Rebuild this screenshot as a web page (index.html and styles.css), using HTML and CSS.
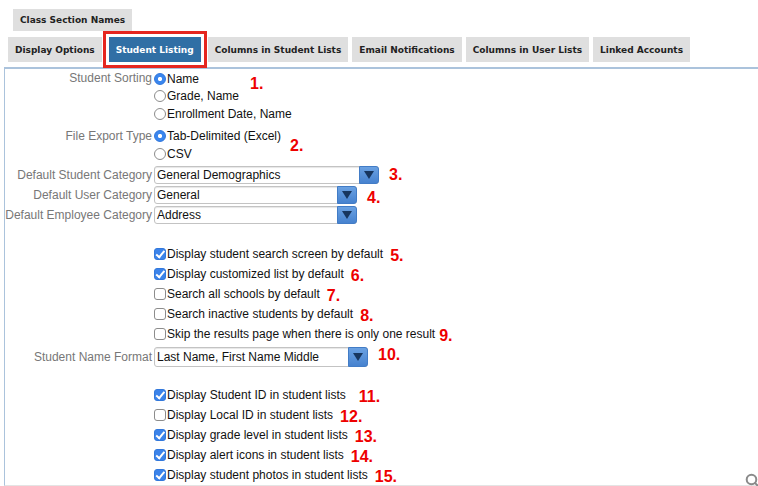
FILE: index.html
```html
<!DOCTYPE html>
<html lang="en">
<head>
<meta charset="utf-8">
<title>Student Listing</title>
<link rel="stylesheet" href="styles.css">
</head>
<body>
<div class="page">
  <div class="tabs tabs-top">
    <div class="tab">Class Section Names</div>
  </div>
  <div class="tabs tabs-main">
    <div class="tab">Display Options</div>
    <div class="tab active">Student Listing</div>
    <div class="tab">Columns in Student Lists</div>
    <div class="tab">Email Notifications</div>
    <div class="tab">Columns in User Lists</div>
    <div class="tab">Linked Accounts</div>
  </div>

  <div class="panel">
    <div class="field group">
      <div class="label">Student Sorting</div>
      <div class="opts">
        <label class="opt"><input type="radio" name="sort" checked>Name<span class="n n1">1.</span></label>
        <label class="opt"><input type="radio" name="sort">Grade, Name</label>
        <label class="opt"><input type="radio" name="sort">Enrollment Date, Name</label>
      </div>
    </div>
    <div class="field group group-gap">
      <div class="label">File Export Type</div>
      <div class="opts">
        <label class="opt"><input type="radio" name="exp" checked>Tab-Delimited (Excel)<span class="n n2">2.</span></label>
        <label class="opt"><input type="radio" name="exp">CSV</label>
      </div>
    </div>

    <div class="selects">
      <div class="field sel-row">
        <div class="label">Default Student Category</div>
        <div class="select w-wide"><span class="val">General Demographics</span><span class="arrow"><svg width="10" height="8" viewBox="0 0 10 8"><polygon points="0,0 10,0 5,8"/></svg></span></div>
        <span class="n n-sel">3.</span>
      </div>
      <div class="field sel-row">
        <div class="label">Default User Category</div>
        <div class="select w-mid"><span class="val">General</span><span class="arrow"><svg width="10" height="8" viewBox="0 0 10 8"><polygon points="0,0 10,0 5,8"/></svg></span></div>
        <span class="n n-sel n4">4.</span>
      </div>
      <div class="field sel-row">
        <div class="label">Default Employee Category</div>
        <div class="select w-mid"><span class="val">Address</span><span class="arrow"><svg width="10" height="8" viewBox="0 0 10 8"><polygon points="0,0 10,0 5,8"/></svg></span></div>
      </div>
    </div>

    <div class="checks checks-first">
      <label class="chk"><input type="checkbox" checked>Display student search screen by default<span class="n">5.</span></label>
      <label class="chk"><input type="checkbox" checked>Display customized list by default<span class="n">6.</span></label>
      <label class="chk"><input type="checkbox">Search all schools by default<span class="n">7.</span></label>
      <label class="chk"><input type="checkbox">Search inactive students by default<span class="n">8.</span></label>
      <label class="chk"><input type="checkbox">Skip the results page when there is only one result<span class="n n9">9.</span></label>
    </div>

    <div class="field sel-row tall">
      <div class="label">Student Name Format</div>
      <div class="select w-name"><span class="val">Last Name, First Name Middle</span><span class="arrow"><svg width="10" height="8" viewBox="0 0 10 8"><polygon points="0,0 10,0 5,8"/></svg></span></div>
      <span class="n n-sel">10.</span>
    </div>

    <div class="checks checks-second">
      <label class="chk"><input type="checkbox" checked>Display Student ID in student lists<span class="n n11">11.</span></label>
      <label class="chk"><input type="checkbox">Display Local ID in student lists<span class="n">12.</span></label>
      <label class="chk"><input type="checkbox" checked>Display grade level in student lists<span class="n">13.</span></label>
      <label class="chk"><input type="checkbox" checked>Display alert icons in student lists<span class="n">14.</span></label>
      <label class="chk"><input type="checkbox" checked>Display student photos in student lists<span class="n">15.</span></label>
    </div>
  </div>
</div>

<div class="corner" aria-hidden="true">
  <svg width="13" height="13" viewBox="0 0 13 13"><circle cx="6.5" cy="6.5" r="4.8" fill="none" stroke="#8a8a8a" stroke-width="2"/><line x1="9.6" y1="9.6" x2="13" y2="13" stroke="#8a8a8a" stroke-width="2"/></svg>
</div>
</body>
</html>
```

FILE: styles.css
```css
html, body {
  margin: 0;
  padding: 0;
  background: #fff;
}
body {
  font-family: "Liberation Sans", Arial, sans-serif;
  font-size: 12px;
  color: #111;
  overflow: hidden;
  height: 486px;
}
.page {
  padding-top: 9px;
}

/* tabs */
.tabs {
  display: flex;
  gap: 4px;
  font-family: "DejaVu Sans", Verdana, sans-serif;
  font-weight: bold;
  font-size: 9px;
  color: #222;
}
.tabs-top {
  padding-left: 13px;
}
.tabs-main {
  padding-left: 8px;
  margin-top: 6px;
}
.tab {
  background: #dfdfdf;
  height: 25px;
  padding: 0 7px;
  box-sizing: border-box;
  display: flex;
  align-items: center;
  white-space: nowrap;
}
.tabs-top .tab {
  height: 22px;
  padding: 0 7px;
}
.tab.active {
  background: #306fa5;
  color: #fff;
  outline: 3px solid #e5261f;
  outline-offset: 3px;
  margin: 0 3px 0 3px;
}

/* panel */
.panel {
  margin: 5px 0 0 4px;
  border-top: 2px solid #abc3dc;
  border-left: 1px solid #abc3dc;
  border-bottom: 1px solid #e4e4e4;
  padding-top: 1px;
  height: 415px;
}
.field {
  display: flex;
}
.label {
  width: 147px;
  flex-shrink: 0;
  text-align: right;
  color: #777;
  white-space: nowrap;
}
.group .label {
  line-height: 17.5px;
}
.group-gap {
  margin-top: 5px;
}
.opts {
  display: flex;
  flex-direction: column;
}
.opt {
  height: 17.5px;
  display: flex;
  align-items: center;
  white-space: nowrap;
}
input[type="radio"] {
  appearance: none;
  -webkit-appearance: none;
  width: 12px;
  height: 12px;
  margin: 0 1px 0 2px;
  border: 1px solid #8c8c8c;
  border-radius: 50%;
  background: #fff;
  box-sizing: border-box;
  flex-shrink: 0;
}
input[type="radio"]:checked {
  border-color: #2f76dc;
  background: radial-gradient(circle, #fff 0 1.8px, #3a86ee 2.4px);
}
input[type="checkbox"] {
  appearance: none;
  -webkit-appearance: none;
  position: relative;
  width: 12px;
  height: 12px;
  margin: 0 1px 0 2px;
  border: 1px solid #8c8c8c;
  border-radius: 3px;
  background: #fff;
  box-sizing: border-box;
  flex-shrink: 0;
}
input[type="checkbox"]:checked {
  background: #3b83ea;
  border-color: #3278db;
}
input[type="checkbox"]:checked::after {
  content: "";
  position: absolute;
  left: 3.3px;
  top: 0.4px;
  width: 3px;
  height: 6.5px;
  border: solid #fff;
  border-width: 0 2px 2px 0;
  transform: rotate(40deg);
}

/* selects */
.selects {
  margin-top: 2.5px;
}
.sel-row {
  height: 20px;
  align-items: center;
}
.sel-row .label {
  line-height: 20px;
}
.select {
  display: flex;
  height: 18px;
  box-sizing: border-box;
  margin-left: 2px;
  border: 1px solid #c3c3c3;
  border-radius: 3px;
  background: #fff;
  box-shadow: inset 0 1px 1px rgba(0, 0, 0, 0.1);
}
.select .val {
  flex: 1;
  padding-left: 2px;
  line-height: 16px;
  white-space: nowrap;
  color: #111;
}
.select .arrow {
  width: 18px;
  margin: -1px -1px -1px 0;
  background: linear-gradient(#6aa1e2, #4682cf);
  border: 1px solid #427cc6;
  border-radius: 0 3px 3px 0;
  display: flex;
  align-items: center;
  justify-content: center;
}
.select .arrow svg {
  fill: #17365f;
}
.w-wide { width: 225px; }
.w-mid { width: 203px; }
.w-name { width: 214px; }
.sel-row.tall {
  height: 25px;
  align-items: flex-start;
}
.sel-row.tall .label,
.sel-row.tall .select,
.sel-row.tall .n {
  margin-top: 3px;
}
.sel-row.tall .label {
  line-height: 20px;
}
.sel-row.tall .select {
  height: 20px;
}
.sel-row.tall .select .val {
  line-height: 18px;
}

/* checkboxes */
.checks {
  padding-left: 147px;
}
.checks-first {
  margin-top: 19px;
}
.checks-second {
  margin-top: 16px;
}
.chk {
  height: 20px;
  display: flex;
  align-items: center;
  white-space: nowrap;
}

/* red annotation numbers */
.n {
  position: relative;
  top: 2px;
  margin-left: 7px;
  font-family: "Liberation Sans", Arial, sans-serif;
  font-weight: bold;
  font-size: 16px;
  line-height: 1;
  color: #ee0000;
}
.n1 {
  margin-left: 51px;
  top: 5px;
}
.n2 {
  margin-left: 9px;
  top: 10px;
}
.n-sel {
  margin-left: 10px;
  top: 0;
}
.sel-row .n4 {
  top: 3px;
}
.n9 {
  margin-left: 4px;
}
.n11 {
  margin-left: 13px;
}

.corner {
  position: fixed;
  left: 745px;
  top: 473px;
  line-height: 0;
}
```
